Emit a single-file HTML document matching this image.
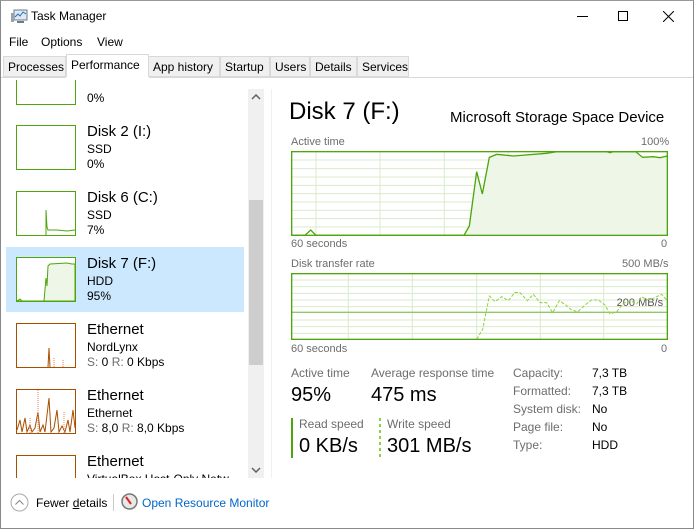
<!DOCTYPE html>
<html><head><meta charset="utf-8">
<style>
*{margin:0;padding:0;box-sizing:border-box}
body{width:694px;height:529px;background:#fff;font-family:"Liberation Sans",sans-serif;color:#000;position:relative;overflow:hidden;font-size:12px}
.a{position:absolute;white-space:nowrap}
.win{position:absolute;left:0;top:0;width:694px;height:529px;border:1px solid #888;border-top:1px solid #999}
.tab{position:absolute;top:56px;height:21px;border:1px solid #d9d9d9;background:#f0f0f0;font-size:12px;padding:3px 4px 0 4px}
.thumb{position:absolute;width:60px;height:45px;border:1px solid #4da60c;background:#fff}
.eth{border-color:#a74f01}
.t1{font-size:15px}
.t2{font-size:12px}
.g{color:#6d6d6d}
.lbl{color:#6d6d6d;font-size:12px}
</style></head><body>
<div class="win"></div>
<!-- title -->
<svg class="a" style="left:10px;top:9px" width="18" height="15" viewBox="0 0 18 15"><rect x="4" y="1" width="13" height="10" fill="#dfe9f2" stroke="#6b7c8a"/><polyline points="5,8 8,5 10,7 13,3 16,5" fill="none" stroke="#2a6fb5" stroke-width="1"/><rect x="1" y="4" width="3" height="9" fill="#9aa3ab"/><rect x="7" y="12" width="7" height="2" fill="#6b7c8a"/></svg>
<div class="a" style="left:31px;top:9px;font-size:12px">Task Manager</div>
<div class="a" style="left:577px;top:16px;width:11px;height:1px;background:#000"></div>
<div class="a" style="left:618px;top:11px;width:10px;height:10px;border:1px solid #000"></div>
<svg class="a" style="left:663px;top:11px" width="11" height="11"><path d="M0 0L11 11M11 0L0 11" stroke="#000" stroke-width="1"/></svg>
<!-- menu -->
<div class="a" style="left:9px;top:35px">File</div>
<div class="a" style="left:41px;top:35px">Options</div>
<div class="a" style="left:97px;top:35px">View</div>
<div class="a" style="left:1px;top:50px;width:692px;height:6px;background:#fff"></div>
<div class="tab" style="left:3px;width:63px">Processes</div>
<div class="tab" style="left:148px;width:72px">App history</div>
<div class="tab" style="left:220px;width:50px">Startup</div>
<div class="tab" style="left:270px;width:40px">Users</div>
<div class="tab" style="left:310px;width:47px">Details</div>
<div class="tab" style="left:357px;width:52px">Services</div>
<div class="tab" style="left:66px;top:54px;width:83px;height:24px;background:#fff;border-bottom:none;padding-top:3px">Performance</div>
<div class="a" style="left:1px;top:77px;width:692px;height:1px;background:#d9d9d9"></div>
<div class="a" style="left:66px;top:77px;width:83px;height:1px;background:#fff"></div>
<!-- left list -->
<div class="a" style="left:6px;top:247px;width:238px;height:65px;background:#cce8ff"></div>
<div class="thumb" style="left:16px;top:80px;height:25px;border-top:none"></div>
<div class="a t2" style="left:87px;top:91px">0%</div>

<div class="thumb" style="left:16px;top:125px"></div>
<div class="a t1" style="left:87px;top:123px">Disk 2 (I:)</div>
<div class="a t2" style="left:87px;top:142px">SSD</div>
<div class="a t2" style="left:87px;top:157px">0%</div>

<div class="thumb" style="left:16px;top:191px"><svg width="58" height="43" style="position:absolute;left:0;top:0"><polyline points="29,43 29,43 29,18 30,35 31,38 40,38 50,39 58,38" fill="none" stroke="#4da60c"/></svg></div>
<div class="a t1" style="left:87px;top:189px">Disk 6 (C:)</div>
<div class="a t2" style="left:87px;top:208px">SSD</div>
<div class="a t2" style="left:87px;top:223px">7%</div>

<div class="thumb" style="left:16px;top:257px"><svg width="58" height="43" style="position:absolute;left:0;top:0"><polygon points="0,43 3,41 5,43 27,43 29,20 30,28 31,8 33,6 50,5 55,6 58,6 58,43" fill="#eef6e8" stroke="#4da60c"/></svg></div>
<div class="a t1" style="left:87px;top:255px">Disk 7 (F:)</div>
<div class="a t2" style="left:87px;top:274px">HDD</div>
<div class="a t2" style="left:87px;top:289px">95%</div>

<div class="thumb eth" style="left:16px;top:323px"><svg width="58" height="43" style="position:absolute;left:0;top:0"><polyline points="31,43 32,24 33,43" fill="none" stroke="#a74f01"/><path d="M37 43V34M46 43V35" stroke="#e8825a" stroke-dasharray="1,1"/></svg></div>
<div class="a t1" style="left:87px;top:321px">Ethernet</div>
<div class="a t2" style="left:87px;top:340px">NordLynx</div>
<div class="a t2" style="left:87px;top:355px"><span class="g">S:</span> 0 <span class="g">R:</span> 0 Kbps</div>

<div class="thumb eth" style="left:16px;top:389px"><svg width="58" height="43" style="position:absolute;left:0;top:0"><polyline points="0,40 3,30 5,42 8,28 10,42 13,35 15,42 18,38 21,22 23,42 26,35 28,42 32,8 34,42 37,38 40,20 42,42 45,36 48,42 51,30 53,42 56,20 58,38" fill="none" stroke="#a74f01"/><path d="M21 43V0M47 43V22M13 43V28" stroke="#e8825a" stroke-dasharray="1,1"/></svg></div>
<div class="a t1" style="left:87px;top:387px">Ethernet</div>
<div class="a t2" style="left:87px;top:406px">Ethernet</div>
<div class="a t2" style="left:87px;top:421px"><span class="g">S:</span> 8,0 <span class="g">R:</span> 8,0 Kbps</div>

<div style="position:absolute;left:0;top:455px;width:247px;height:23px;overflow:hidden">
<div class="thumb eth" style="left:16px;top:0"></div>
<div class="a t1" style="left:87px;top:-2px">Ethernet</div>
<div class="a t2" style="left:87px;top:17px">VirtualBox Host-Only Netw</div>
</div>
<!-- scrollbar -->
<div class="a" style="left:248px;top:89px;width:16px;height:389px;background:#f0f0f0"></div>
<div class="a" style="left:249px;top:200px;width:14px;height:165px;background:#cdcdcd"></div>
<svg class="a" style="left:251px;top:94px" width="10" height="6"><path d="M1 5L5 1L9 5" fill="none" stroke="#606060" stroke-width="1.5"/></svg>
<svg class="a" style="left:251px;top:467px" width="10" height="6"><path d="M1 1L5 5L9 1" fill="none" stroke="#606060" stroke-width="1.5"/></svg>
<div class="a" style="left:271px;top:89px;width:1px;height:389px;background:#f0f0f0"></div>
<!-- right header -->
<div class="a" style="left:289px;top:98px;font-size:24px">Disk 7 (F:)</div>
<div class="a" style="left:450px;top:109px;font-size:15px">Microsoft Storage Space Device</div>
<div class="a lbl" style="left:291px;top:136px;font-size:11px">Active time</div>
<div class="a lbl" style="left:641px;top:136px;font-size:11px">100%</div>
<div class="a lbl" style="left:291px;top:238px;font-size:11px">60 seconds</div>
<div class="a lbl" style="left:661px;top:238px;font-size:11px">0</div>
<div class="a lbl" style="left:291px;top:258px;font-size:11px">Disk transfer rate</div>
<div class="a lbl" style="left:622px;top:258px;font-size:11px">500 MB/s</div>
<div class="a lbl" style="left:291px;top:343px;font-size:11px">60 seconds</div>
<div class="a lbl" style="left:661px;top:343px;font-size:11px">0</div>
<svg class="a" style="left:280px;top:130px" width="400" height="230" viewBox="0 0 1200 690">
<g stroke="#d9ebcc" stroke-width="3">
<path d="M35 90H1162M35 116H1162M35 141H1162M35 166H1162M35 191H1162M35 216H1162M35 241H1162M35 266H1162M35 291H1162"/>
<path d="M108 65V316M300 65V316M493 65V316M685 65V316M876 65V316M1067 65V316"/>
<path d="M35 450H1162M35 470H1162M35 490H1162M35 510H1162M35 530H1162M35 570H1162M35 590H1162M35 610H1162"/>
<path d="M205 431V628M397 431V628M590 431V628M781 431V628M971 431V628"/>
</g>
<polygon points="552,316 568,288 590,125 607,192 628,82 650,73 700,78 800,70 830,65 980,65 990,68 1000,65 1067,65 1088,82 1120,80 1140,83 1162,78 1162,316" fill="#eef6e8"/>
<polyline points="35,316 75,316 92,300 108,316 552,316 568,288 590,125 607,192 628,82 650,73 700,78 800,70 830,65 980,65 990,68 1000,65 1067,65 1088,82 1120,80 1140,83 1162,78" fill="none" stroke="#4da60c" stroke-width="4"/>
<rect x="35" y="65" width="1127" height="251" fill="none" stroke="#4da60c" stroke-width="4"/>
<path d="M35 547H1162" stroke="#8fc96a" stroke-width="4"/>
<text x="1010" y="528" font-family="Liberation Sans" font-size="33" fill="#555">200 MB/s</text>
<polyline points="590,628 608,598 628,498 645,515 665,500 685,512 705,487 720,488 742,512 760,493 780,518 800,518 818,548 838,512 860,527 875,540 893,545 915,525 935,510 955,510 975,525 990,552 1010,545 1030,520 1050,512 1070,522 1085,500 1100,510 1120,505 1145,493 1162,512" fill="none" stroke="#8dd13c" stroke-width="3" stroke-dasharray="10,5"/>
<rect x="35" y="431" width="1127" height="197" fill="none" stroke="#4da60c" stroke-width="4"/>
</svg>
<!-- stats -->
<div class="a lbl" style="left:291px;top:366px">Active time</div>
<div class="a" style="left:291px;top:384px;font-size:20px">95%</div>
<div class="a lbl" style="left:371px;top:366px">Average response time</div>
<div class="a" style="left:371px;top:384px;font-size:20px">475 ms</div>
<div class="a" style="left:291px;top:418px;width:2px;height:40px;background:#4da60c"></div>
<div class="a lbl" style="left:299px;top:417px">Read speed</div>
<div class="a" style="left:299px;top:435px;font-size:20px">0 KB/s</div>
<div class="a" style="left:379px;top:418px;width:2px;height:40px;background:repeating-linear-gradient(#8dd13c 0 3px,transparent 3px 6px)"></div>
<div class="a lbl" style="left:387px;top:417px">Write speed</div>
<div class="a" style="left:387px;top:435px;font-size:20px">301 MB/s</div>
<div class="a lbl" style="left:513px;top:366px">Capacity:</div><div class="a" style="left:592px;top:366px">7,3 TB</div>
<div class="a lbl" style="left:513px;top:384px">Formatted:</div><div class="a" style="left:592px;top:384px">7,3 TB</div>
<div class="a lbl" style="left:513px;top:402px">System disk:</div><div class="a" style="left:592px;top:402px">No</div>
<div class="a lbl" style="left:513px;top:420px">Page file:</div><div class="a" style="left:592px;top:420px">No</div>
<div class="a lbl" style="left:513px;top:438px">Type:</div><div class="a" style="left:592px;top:438px">HDD</div>
<!-- bottom -->
<svg class="a" style="left:10px;top:493px" width="19" height="19"><circle cx="9.5" cy="9.5" r="8.5" fill="#fff" stroke="#aaa"/><path d="M5.5 11.5L9.5 7.5L13.5 11.5" fill="none" stroke="#888"/></svg>
<div class="a" style="left:36px;top:496px">Fewer <u>d</u>etails</div>
<div class="a" style="left:113px;top:494px;width:1px;height:17px;background:#ccc"></div>
<svg class="a" style="left:121px;top:493px" width="17" height="17"><circle cx="8.5" cy="8.5" r="7.5" fill="#e8e8e8" stroke="#777" stroke-width="1.5"/><path d="M5 4L10 11" stroke="#d22" stroke-width="2"/></svg>
<div class="a" style="left:142px;top:496px;color:#0066cc">Open Resource Monitor</div>
</body></html>
